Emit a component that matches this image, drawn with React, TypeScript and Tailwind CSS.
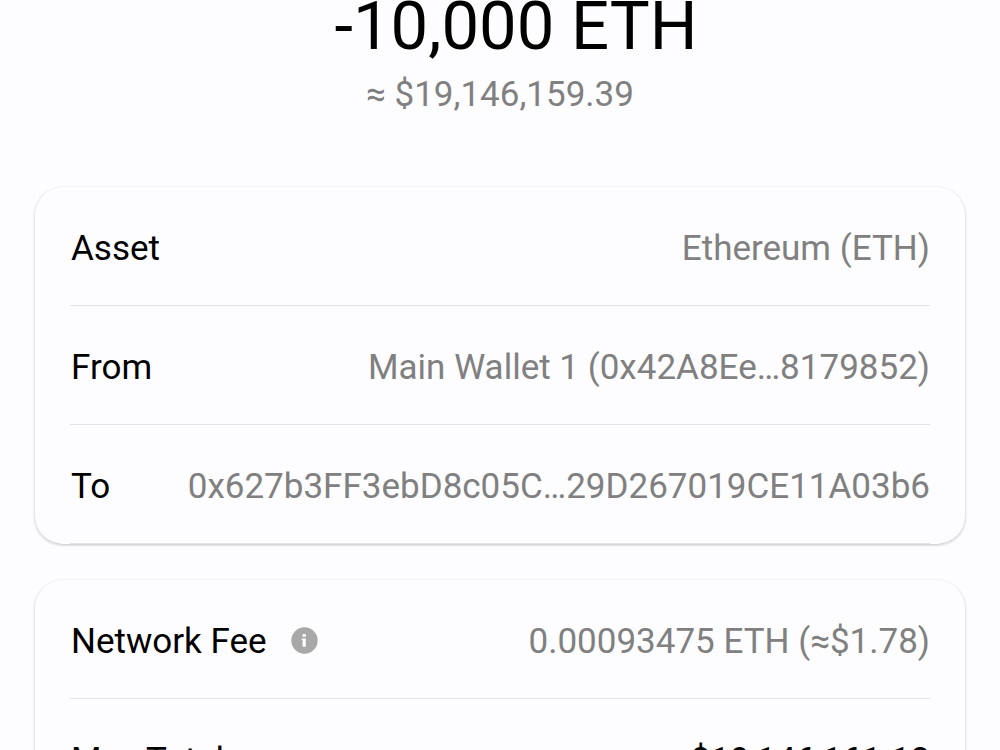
import React from 'react';

interface DetailRowProps {
  label: React.ReactNode;
  value: string;
  strong?: boolean;
}

const InfoIcon: React.FC = () => (
  <svg viewBox="0 0 27 27" className="w-[27px] h-[27px]" aria-hidden="true">
    <circle cx="13.5" cy="13.5" r="13.2" fill="#a8a8a8" />
    <rect x="11.6" y="7" width="3.2" height="2.8" fill="#fff" />
    <path d="M10.8 11.4h4v8.4h-3.2v-6.6h-.8z" fill="#fff" />
  </svg>
);

const DetailRow: React.FC<DetailRowProps> = ({ label, value, strong }) => (
  <div className="flex h-[119px] items-center justify-between border-b border-[#e4e4e6] pt-1.5 pl-px text-[35px] leading-10 whitespace-nowrap">
    <dt className="flex items-center gap-6 text-black">{label}</dt>
    <dd className={strong ? 'text-black' : 'text-[#808080]'}>{value}</dd>
  </div>
);

const Card: React.FC<{ children: React.ReactNode }> = ({ children }) => (
  <dl className="rounded-[28px] bg-[#fdfdff] px-[35px] shadow-[0_1px_3px_rgba(0,0,0,0.25)]">{children}</dl>
);

const App: React.FC = () => {
  return (
    <div className="h-screen overflow-hidden bg-[#fdfdff] font-[Roboto,sans-serif]">
      <header className="-mt-[14px] flex flex-col items-center">
        <h1 className="pl-8 text-[67px] leading-[80px] text-black">-10,000 ETH</h1>
        <p className="mt-[9px] text-[35px] leading-10 text-[#808080]">≈ $19,146,159.39</p>
      </header>

      <main className="mt-[72px] flex flex-col gap-9 px-[35px]">
        <Card>
          <DetailRow label="Asset" value="Ethereum (ETH)" />
          <DetailRow label="From" value="Main Wallet 1 (0x42A8Ee…8179852)" />
          <DetailRow label="To" value="0x627b3FF3ebD8c05C…29D267019CE11A03b6" />
        </Card>
        <Card>
          <DetailRow
            label={
              <>
                Network Fee
                <button type="button" aria-label="About the network fee" className="pb-1">
                  <InfoIcon />
                </button>
              </>
            }
            value="0.00093475 ETH (≈$1.78)"
          />
          <DetailRow label="Max Total" value="$19,146,161.18" strong />
        </Card>
      </main>
    </div>
  );
};

export default App;
